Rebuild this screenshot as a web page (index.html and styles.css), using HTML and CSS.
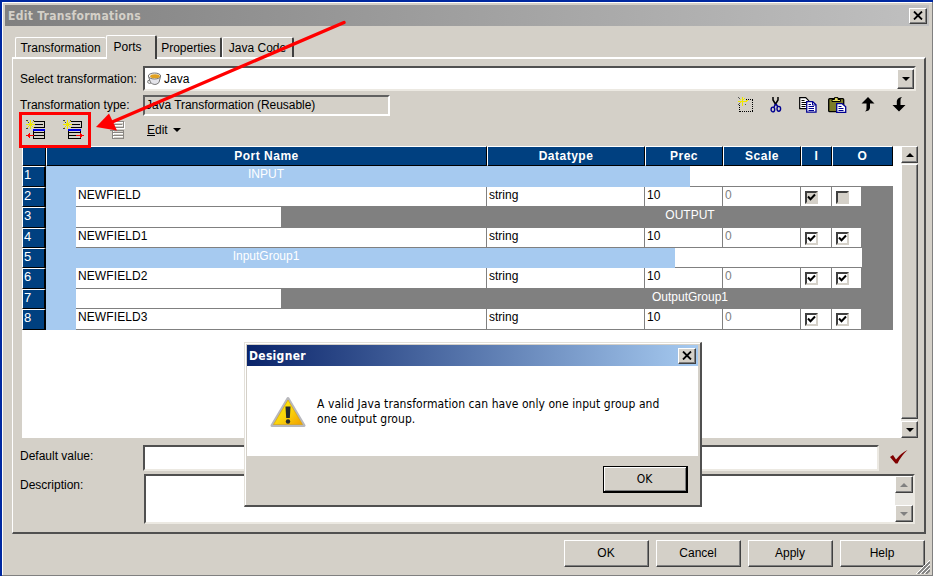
FILE: index.html
```html
<!DOCTYPE html>
<html lang="en">
<head>
  <meta charset="UTF-8">
  <title>Edit Transformations</title>
  <link rel="stylesheet" href="styles.css">
</head>
<body>

  <div class="window">
    <div class="titlebar">
      <span>Edit Transformations</span>
      <button class="close"><svg width="10" height="9" viewBox="0 0 10 9"><path d="M1 .5l8 8M9 .5l-8 8" stroke="#000" stroke-width="1.8"/></svg></button>
    </div>

    <div class="tabs">
      <div class="tab tab-first"><span>Transformation</span></div>
      <div class="tab active"><span>Ports</span></div>
      <div class="tab tab-props"><span>Properties</span></div>
      <div class="tab tab-code"><span>Java Code</span></div>
    </div>

    <div class="panel">
      <div class="row select-row">
        <label>Select transformation:</label>
        <div class="combo">
          <svg class="cup" width="15" height="14" viewBox="0 0 15 14">
            <path d="M1.5 4.500h12L12 10.500q-4 4-8.500 0z" fill="#e4e4ea" stroke="#777" />
            <path d="M3 8q-3 0-2.300 2.500Q2 12 4 11" fill="none" stroke="#777"/>
            <ellipse cx="7.500" cy="4" rx="6.200" ry="3" fill="#f4f4f4" stroke="#777"/>
            <ellipse cx="8" cy="4.300" rx="4.800" ry="2" fill="#e0a020"/>
          </svg>
          <span>Java</span>
          <button class="arrow-btn"><i class="down"></i></button>
        </div>
      </div>

      <div class="row type-row">
        <label>Transformation type:</label>
        <div class="readonly">Java Transformation (Reusable)</div>
        <div class="tools">
          <svg class="t-new" width="16" height="16" viewBox="0 0 16 16" shape-rendering="crispEdges">
            <path d="M8 2.500h7M1.500 8v7M2 14.500h13M14.500 3v12" fill="none" stroke="#000" stroke-dasharray="1 1"/>
            <path d="M2 2l1 1M4 0v9M7 1L1 7M0 4.500h9M8 3h2" stroke="#f0e800"/>
            <path d="M0 0l2 2M0 8l2-2M7 7l1 1" stroke="#555"/>
          </svg>
          <svg class="t-cut" width="12" height="16" viewBox="0 0 12 16">
            <path d="M3 0v3l3 5M8 0v3L5 8" fill="none" stroke="#000" stroke-width="1.500"/>
            <path d="M5.500 7L4 10M6 7l2 3" stroke="#000090" stroke-width="1.500"/>
            <ellipse cx="2.900" cy="12.500" rx="1.800" ry="2.400" fill="none" stroke="#000090" stroke-width="1.400"/>
            <ellipse cx="8.800" cy="11.800" rx="1.800" ry="2.400" fill="none" stroke="#000090" stroke-width="1.400"/>
          </svg>
          <svg class="t-copy" width="18" height="16" viewBox="0 0 18 16">
            <path d="M.7.7h6l3 3v8h-9z" fill="#fff" stroke="#000" stroke-width="1.200"/>
            <path d="M2.500 3.500h3M2.500 5.500h5M2.500 7.500h5M2.500 9.500h4" stroke="#000"/>
            <path d="M7.700 4.700h6l3.300 3v7.500H7.700z" fill="#fff" stroke="#000090" stroke-width="1.300"/>
            <path d="M13.500 4.500V8H17M9.500 7.500h2.500M9.500 9.500h5.500M9.500 11.500h5.500M9.500 13.500h5.500" fill="none" stroke="#000090"/>
          </svg>
          <svg class="t-paste" width="19" height="16" viewBox="0 0 19 16">
            <rect x=".7" y="1.700" width="15" height="13" rx="1" fill="#7c7c28" stroke="#000" stroke-width="1.300"/>
            <path d="M4 4.500V2.500h2.500V.6h3.500v1.900h2.500v2z" fill="#e8e060" stroke="#000"/>
            <path d="M8.700 6.700h5.500l3.500 3v5.600h-9z" fill="#fff" stroke="#000090" stroke-width="1.300"/>
            <path d="M10.500 9.500h3M10.500 11.500h5M10.500 13.500h5" stroke="#000090"/>
          </svg>
          <svg class="t-up" width="14" height="15" viewBox="0 0 14 15"><path d="M7 0l6.500 6.500H9V11q-.5 3-5 3.500Q6 13 5.500 10V6.500H.5z"/></svg>
          <svg class="t-down" width="14" height="15" viewBox="0 0 14 15"><path d="M7 14.500L.5 8h4.300V4q.7-3.500 5.200-4Q8 1.500 8.500 4v4h5z"/></svg>
        </div>
      </div>

      <div class="row edit-row">
        <svg class="port-in" width="20" height="19" viewBox="0 0 20 19" shape-rendering="crispEdges">
          <path d="M7 1h12v8H7z" fill="#d4d0c8"/>
          <path d="M8 1.500h11M18.500 1v7M9 4.500h8M8 7.500h11" fill="none" stroke="#000"/>
          <path d="M7 9h12v2H7z" fill="#0000e8"/>
          <path d="M7.500 11v7M18.500 11v7M7 12.500h12M7 15.500h12M7 18.500h12" fill="none" stroke="#000"/>
          <path d="M1 1l7 7M4.500 0v9M8 1L1 8M0 4.500h9" stroke="#f0e800" stroke-width="1.400"/>
          <path d="M0 0h2v1H0zM2 2h1v1H2zM0 8h2v1H0zM7 0h1v1H7z" fill="#444"/>
          <path d="M0 15h8v1H0zM2 14h1v3H2zM3 13h1v5H3z" fill="#f00"/>
        </svg>
        <svg class="port-out" width="22" height="19" viewBox="0 0 22 19" shape-rendering="crispEdges">
          <path d="M8 1.500h11M18.500 1v7M9 4.500h8M8 7.500h11" fill="none" stroke="#000"/>
          <path d="M5 9h13v2H5z" fill="#0000e8"/>
          <path d="M5.500 11v7M17.500 11v7M5 12.500h13M5 15.500h13M5 18.500h13" fill="none" stroke="#000"/>
          <path d="M1 1l7 7M4.500 0v9M8 1L1 8M0 4.500h9" stroke="#f0e800" stroke-width="1.400"/>
          <path d="M0 0h2v1H0zM2 2h1v1H2zM0 8h2v1H0zM7 0h1v1H7z" fill="#444"/>
          <path d="M13 15h8v1h-8zM18 14h1v3h-1zM17 13h1v5h-1z" fill="#f00"/>
        </svg>
        <svg class="port-off" width="20" height="19" viewBox="0 0 20 19" shape-rendering="crispEdges">
          <path d="M9 2.500h11M19.500 2v7M10 5.500h8M9 8.500h11M8.500 10v8M8 13.500h11M8 16.500h11" fill="none" stroke="#fff"/>
          <path d="M8 1.500h11M18.500 1v7M9 4.500h8M8 7.500h11M5 10.500h14M7.500 10v8M18.500 10v8M7 12.500h12M7 15.500h12M7 18.500h12M1 1l7 7M8 1L1 8" fill="none" stroke="#8a8783"/>
        </svg>
        <span class="edit"><u>E</u>dit</span><i class="down big"></i>
      </div>

      <div class="ports">
        <div class="grid">
          <div class="line head">
            <b></b><b>Port Name</b><b>Datatype</b><b>Prec</b><b>Scale</b><b>I</b><b>O</b>
          </div>
          <div class="line group-in">
            <span class="num">1</span><span class="bar wide">INPUT</span><span class="blank"></span>
          </div>
          <div class="line field">
            <span class="num">2</span><span class="indent"></span><span class="cell">NEWFIELD</span><span class="cell dt">string</span><span class="cell">10</span><span class="cell dim">0</span>
            <span class="cell chk"><i class="box off"><svg viewBox="0 0 9 9"><path d="M1 3.500l2.500 2.700L8 1.500"/></svg></i></span><span class="cell chk"><i class="box off"></i></span><span class="rest"></span>
          </div>
          <div class="line group-out">
            <span class="num">3</span><span class="indent"></span><span class="blank"></span><span class="bar out">OUTPUT</span>
          </div>
          <div class="line field">
            <span class="num">4</span><span class="indent"></span><span class="cell">NEWFIELD1</span><span class="cell dt">string</span><span class="cell">10</span><span class="cell dim">0</span>
            <span class="cell chk"><i class="box"><svg viewBox="0 0 9 9"><path d="M1 3.500l2.500 2.700L8 1.500"/></svg></i></span><span class="cell chk"><i class="box"><svg viewBox="0 0 9 9"><path d="M1 3.500l2.500 2.700L8 1.500"/></svg></i></span><span class="rest"></span>
          </div>
          <div class="line group-in">
            <span class="num">5</span><span class="bar">InputGroup1</span><span class="blank"></span><span class="rest"></span>
          </div>
          <div class="line field">
            <span class="num">6</span><span class="indent"></span><span class="cell">NEWFIELD2</span><span class="cell dt">string</span><span class="cell">10</span><span class="cell dim">0</span>
            <span class="cell chk"><i class="box"><svg viewBox="0 0 9 9"><path d="M1 3.500l2.500 2.700L8 1.500"/></svg></i></span><span class="cell chk"><i class="box"><svg viewBox="0 0 9 9"><path d="M1 3.500l2.500 2.700L8 1.500"/></svg></i></span><span class="rest"></span>
          </div>
          <div class="line group-out">
            <span class="num">7</span><span class="indent"></span><span class="blank"></span><span class="bar out">OutputGroup1</span>
          </div>
          <div class="line field">
            <span class="num">8</span><span class="indent"></span><span class="cell">NEWFIELD3</span><span class="cell dt">string</span><span class="cell">10</span><span class="cell dim">0</span>
            <span class="cell chk"><i class="box"><svg viewBox="0 0 9 9"><path d="M1 3.500l2.500 2.700L8 1.500"/></svg></i></span><span class="cell chk"><i class="box"><svg viewBox="0 0 9 9"><path d="M1 3.500l2.500 2.700L8 1.500"/></svg></i></span><span class="rest"></span>
          </div>
        </div>
        <div class="scroll">
          <button class="arrow-btn"><i class="up"></i></button>
          <div class="thumb"></div>
          <button class="arrow-btn"><i class="down"></i></button>
        </div>
      </div>

      <div class="row default-row">
        <label>Default value:</label>
        <div class="sunken"></div>
        <svg width="18" height="14" viewBox="0 0 18 14"><path d="M0 7l3-2 3 4.500Q11 3 17.500 0 11 6 7.500 13.500H5.500z" fill="#800000"/></svg>
      </div>
      <div class="row desc-row">
        <label>Description:</label>
        <div class="sunken area">
          <div class="scroll small">
            <button class="arrow-btn"><i class="up gray"></i></button>
            <div class="track"></div>
            <button class="arrow-btn"><i class="down gray"></i></button>
          </div>
        </div>
      </div>
    </div>

    <div class="buttons">
      <button class="btn">OK</button>
      <button class="btn">Cancel</button>
      <button class="btn">Apply</button>
      <button class="btn">Help</button>
    </div>
    <svg class="grip" width="14" height="14" viewBox="0 0 14 14">
      <path d="M2 14L14 2M6 14l8-8M10 14l4-4" stroke="#808080" stroke-width="1.800"/>
      <path d="M0 14L14 0M4 14L14 4M8 14l6-6" stroke="#fff"/>
    </svg>
  </div>

  <!-- message box -->
  <div class="dialog">
    <div class="titlebar">
      <span>Designer</span>
      <button class="close"><svg width="10" height="9" viewBox="0 0 10 9"><path d="M1 .5l8 8M9 .5l-8 8" stroke="#000" stroke-width="1.800"/></svg></button>
    </div>
    <div class="message">
      <svg width="36" height="32" viewBox="0 0 36 32">
        <defs>
          <linearGradient id="warn" x1="0" y1="0" x2="1" y2="1">
            <stop offset="0" stop-color="#fff200"/>
            <stop offset=".5" stop-color="#fbd60c"/>
            <stop offset="1" stop-color="#f0a000"/>
          </linearGradient>
        </defs>
        <path d="M18 2.500L34 29.500H2z" fill="#b8b8bc" stroke="#b8b8bc" stroke-width="3" stroke-linejoin="round"/>
        <path d="M18 4L32.500 28.500h-29z" fill="url(#warn)" stroke="#d8a000" stroke-width=".6"/>
        <path d="M15.500 10.500h5L19.800 22h-3.600z" fill="#222a30"/>
        <circle cx="18" cy="25.500" r="2.200" fill="#222a30"/>
      </svg>
      <p>A valid Java transformation can have only one input group and<br>one output group.</p>
    </div>
    <div class="dialog-footer">
      <button class="btn default">OK</button>
    </div>
  </div>

  <!-- annotation -->
  <svg class="callout" width="340" height="136" viewBox="0 0 340 136">
    <rect x="5.500" y="99.500" width="69" height="33" fill="none" stroke="#f00" stroke-width="3"/>
    <path d="M329 8.500L96 108.500" stroke="#f00" stroke-width="3.400" stroke-linecap="round"/>
    <path d="M81 113l13-13.500 8 17z" fill="#f00"/>
  </svg>

</body>
</html>
```
FILE: styles.css
```css
* {
  box-sizing: border-box;
}

body {
  margin: 0;
  width: 933px;
  height: 576px;
  overflow: hidden;
  position: relative;
  padding: 2px 0 0 2px;
  background: #0028a0;
  font-family: "Liberation Sans", Arial, sans-serif;
  font-size: 12px;
  color: #000;
}

button {
  padding: 0;
  font: inherit;
  background: #d4d0c8;
  border: 1px solid;
  border-color: #fff #404040 #404040 #fff;
  box-shadow: inset -1px -1px #808080;
}

.window {
  position: relative;
  width: 931px;
  height: 574px;
  padding: 3px;
  background: #d4d0c8;
  border: solid #808080;
  border-width: 0 1px 1px 0;
  box-shadow: inset 1px 1px #fff;
}

.titlebar {
  display: flex;
  align-items: center;
  justify-content: space-between;
  height: 21px;
  padding: 0 2px 0 3px;
  background: linear-gradient(90deg, #808080, #c0c0c0);
  color: #d4d0c8;
  font: bold 12px "DejaVu Sans Condensed", "DejaVu Sans", sans-serif;
  letter-spacing: .3px;
}

.close {
  display: flex;
  align-items: center;
  justify-content: center;
  width: 18px;
  height: 16px;
}

/* tabs */
.tabs {
  display: flex;
  align-items: flex-end;
  height: 31px;
  padding-left: 10px;
}

.tab {
  display: flex;
  align-items: center;
  justify-content: center;
  height: 20px;
  border: 1px solid #fff;
  border-bottom: 0;
  border-right: 2px solid #404040;
  border-radius: 2px 2px 0 0;
  white-space: nowrap;
}

.tab-first {
  width: 91px;
  padding-right: 1px;
  border-right: 0;
}

.active {
  position: relative;
  width: 51px;
  height: 24px;
  margin-bottom: -2px;
  padding: 0 7px 2px 0;
  background: #d4d0c8;
}

.tab-props {
  width: 65px;
  border-left: 0;
}

.tab-code {
  width: 72px;
}

.panel {
  width: 914px;
  height: 477px;
  margin-left: 7px;
  padding: 7px 5px 0 8px;
  border: solid;
  border-width: 2px 2px 2px 1px;
  border-color: #fff #505050 #505050 #fff;
}

.row {
  display: flex;
}

.row label {
  flex: none;
  width: 122px;
  margin-left: -1px;
}

.select-row {
  height: 29px;
  align-items: flex-start;
}

.select-row label {
  padding-top: 6px;
}

.combo,
.sunken {
  background: #fff;
  border: 2px solid;
  border-color: #505050 #ece9e2 #ece9e2 #505050;
}

.combo {
  display: flex;
  align-items: center;
  width: 773px;
  height: 25px;
  margin-left: 1px;
  padding-left: 2px;
  gap: 2px;
}

.combo .arrow-btn {
  margin-left: auto;
  height: 20px;
}

.arrow-btn {
  display: flex;
  align-items: center;
  justify-content: center;
  flex: none;
  width: 17px;
  height: 17px;
}

.down,
.up {
  border: 4px solid transparent;
  border-bottom-width: 0;
  border-top-color: #000;
}

.up {
  border-width: 0 4px 4px;
  border-color: transparent transparent #000;
}

.up.gray {
  border-bottom-color: #808080;
}

.down.gray {
  border-top-color: #808080;
}

.type-row {
  height: 22px;
}

.type-row label {
  padding-top: 3px;
}

.readonly {
  width: 247px;
  height: 21px;
  margin-left: 1px;
  padding: 2px 0 0 1px;
  border: 2px solid;
  border-color: #606060 #fff #fff #606060;
  line-height: 13px;
  letter-spacing: -.05px;
}

.tools {
  display: flex;
  padding: 2px 0 0 348px;
}

.tools svg {
  flex: none;
}

.t-cut {
  margin-left: 16px;
}

.t-copy {
  margin-left: 17px;
}

.t-paste {
  margin-left: 11px;
}

.t-up {
  margin-left: 14px;
}

.t-down {
  margin-left: 17px;
}

.edit-row {
  height: 29px;
  padding: 3px 0 0 5px;
  align-items: flex-start;
}

.edit-row svg {
  flex: none;
}

.port-out {
  margin-left: 17px;
}

.port-off {
  margin-left: 20px;
}

.edit {
  margin: 3px 5px 0 22px;
}

.edit-row .big {
  margin-top: 8px;
}

/* ports table */
.ports {
  display: flex;
  width: 896px;
  height: 292px;
  margin-left: 1px;
}

.grid {
  width: 880px;
  background: #fff;
}

.line {
  display: grid;
  width: 871px;
  height: 20.4px;
}

.head {
  grid-template-columns: 24px 441px 158px 78px 78px 31px 61px;
}

.head b {
  background: #004080;
  color: #fff;
  border: solid;
  border-width: 1px 1px 2px 1px;
  border-color: #fff #000 #000 #fff;
  text-align: center;
  line-height: 18px;
  letter-spacing: .5px;
}

.field {
  grid-template-columns: 24px 30px 411px 158px 78px 78px 31px 30px 31px;
}

.num {
  background: #004080;
  color: #fff;
  border: solid;
  border-width: 1px 2px 1px 1px;
  border-color: #fff #000 #000 #fff;
  font-size: 13px;
  line-height: 15px;
  padding-left: 1px;
}

.indent {
  background: #a6caf0;
}

.cell {
  border: solid #808080;
  border-width: 0 1px 1px 0;
  padding-left: 2px;
  line-height: 17px;
  letter-spacing: .1px;
}

.dt {
  padding-left: 2px;
  letter-spacing: 0;
}

.dim {
  color: #808080;
}

.rest {
  background: #808080;
}

.chk {
  padding: 4px 0 0 4px;
}

.box {
  display: block;
  width: 13px;
  height: 13px;
  border: 2px solid;
  border-color: #404040 #d4d0c8 #d4d0c8 #404040;
}

.off {
  background: #d4d0c8;
}

.box svg {
  display: block;
  width: 9px;
  height: 9px;
}

.box path {
  fill: none;
  stroke: #000;
  stroke-width: 2;
}

.group-in {
  grid-template-columns: 24px 629px 187px 31px;
}

.group-in:nth-child(2) {
  grid-template-columns: 24px 644px 203px;
}

.bar {
  background: #a6caf0;
  color: #fff;
  text-align: center;
  line-height: 17px;
  padding-right: 189px;
}

.bar.wide {
  padding-right: 204px;
}

.group-out {
  grid-template-columns: 24px 30px 205px 612px;
}

.bar.out {
  background: #808080;
  padding: 0 0 0 206px;
}

.group-in .blank,
.group-out .blank {
  background: #fff;
  border-bottom: 1px solid #808080;
}

.scroll {
  display: flex;
  flex-direction: column;
  width: 17px;
  background: #e9e7e2;
}

.thumb {
  flex: 1;
  margin: 1px 0 2px;
  background: #d4d0c8;
  border: 1px solid;
  border-color: #fff #404040 #404040 #fff;
  box-shadow: inset -1px -1px #808080;
}

.track {
  flex: 1;
}

.default-row {
  margin-top: 7px;
  height: 29px;
}

.default-row label {
  padding-top: 4px;
}

.default-row .sunken {
  width: 736px;
  height: 26px;
  margin-left: 1px;
}

.default-row svg {
  margin: 5px 0 0 11px;
}

.desc-row label {
  padding-top: 4px;
}

.area {
  display: flex;
  justify-content: flex-end;
  width: 771px;
  height: 50px;
  margin-left: 2px;
}

.small {
  width: 18px;
}

.small .arrow-btn {
  width: 18px;
}

.buttons {
  display: flex;
  gap: 7px;
  justify-content: flex-end;
  padding: 6px 4px 0 0;
}

.btn {
  width: 85px;
  height: 27px;
  padding: 0 1px 1px 0;
}

.grip {
  position: absolute;
  right: 2px;
  bottom: 1px;
}

/* message box */
.dialog {
  position: absolute;
  left: 244px;
  top: 342px;
  width: 458px;
  height: 165px;
  padding: 2px;
  background: #d4d0c8;
  border: solid;
  border-width: 1px 2px 2px 1px;
  border-color: #e4e1da #505050 #505050 #e4e1da;
  box-shadow: inset 1px 1px #fff;
  font-family: "DejaVu Sans Condensed", "DejaVu Sans", sans-serif;
}

.dialog .titlebar {
  padding-left: 2px;
  background: linear-gradient(90deg, #0a246a, #a6caf0);
  color: #fff;
}

.message {
  display: flex;
  height: 90px;
  padding: 30px 0 0 23px;
  background: #fff;
}

.message p {
  margin: 1px 0 0 11px;
  line-height: 15px;
  font-size: 12px;
  letter-spacing: .06px;
  white-space: nowrap;
}

.dialog-footer {
  display: flex;
  justify-content: flex-end;
  padding: 10px 10px 0 0;
}

.btn.default {
  border: 2px solid #000;
  border-width: 1px 2px 2px 1px;
  box-shadow: inset 1px 1px #fff, inset -1px -1px #808080;
}

.callout {
  position: absolute;
  left: 15px;
  top: 14px;
}
```
